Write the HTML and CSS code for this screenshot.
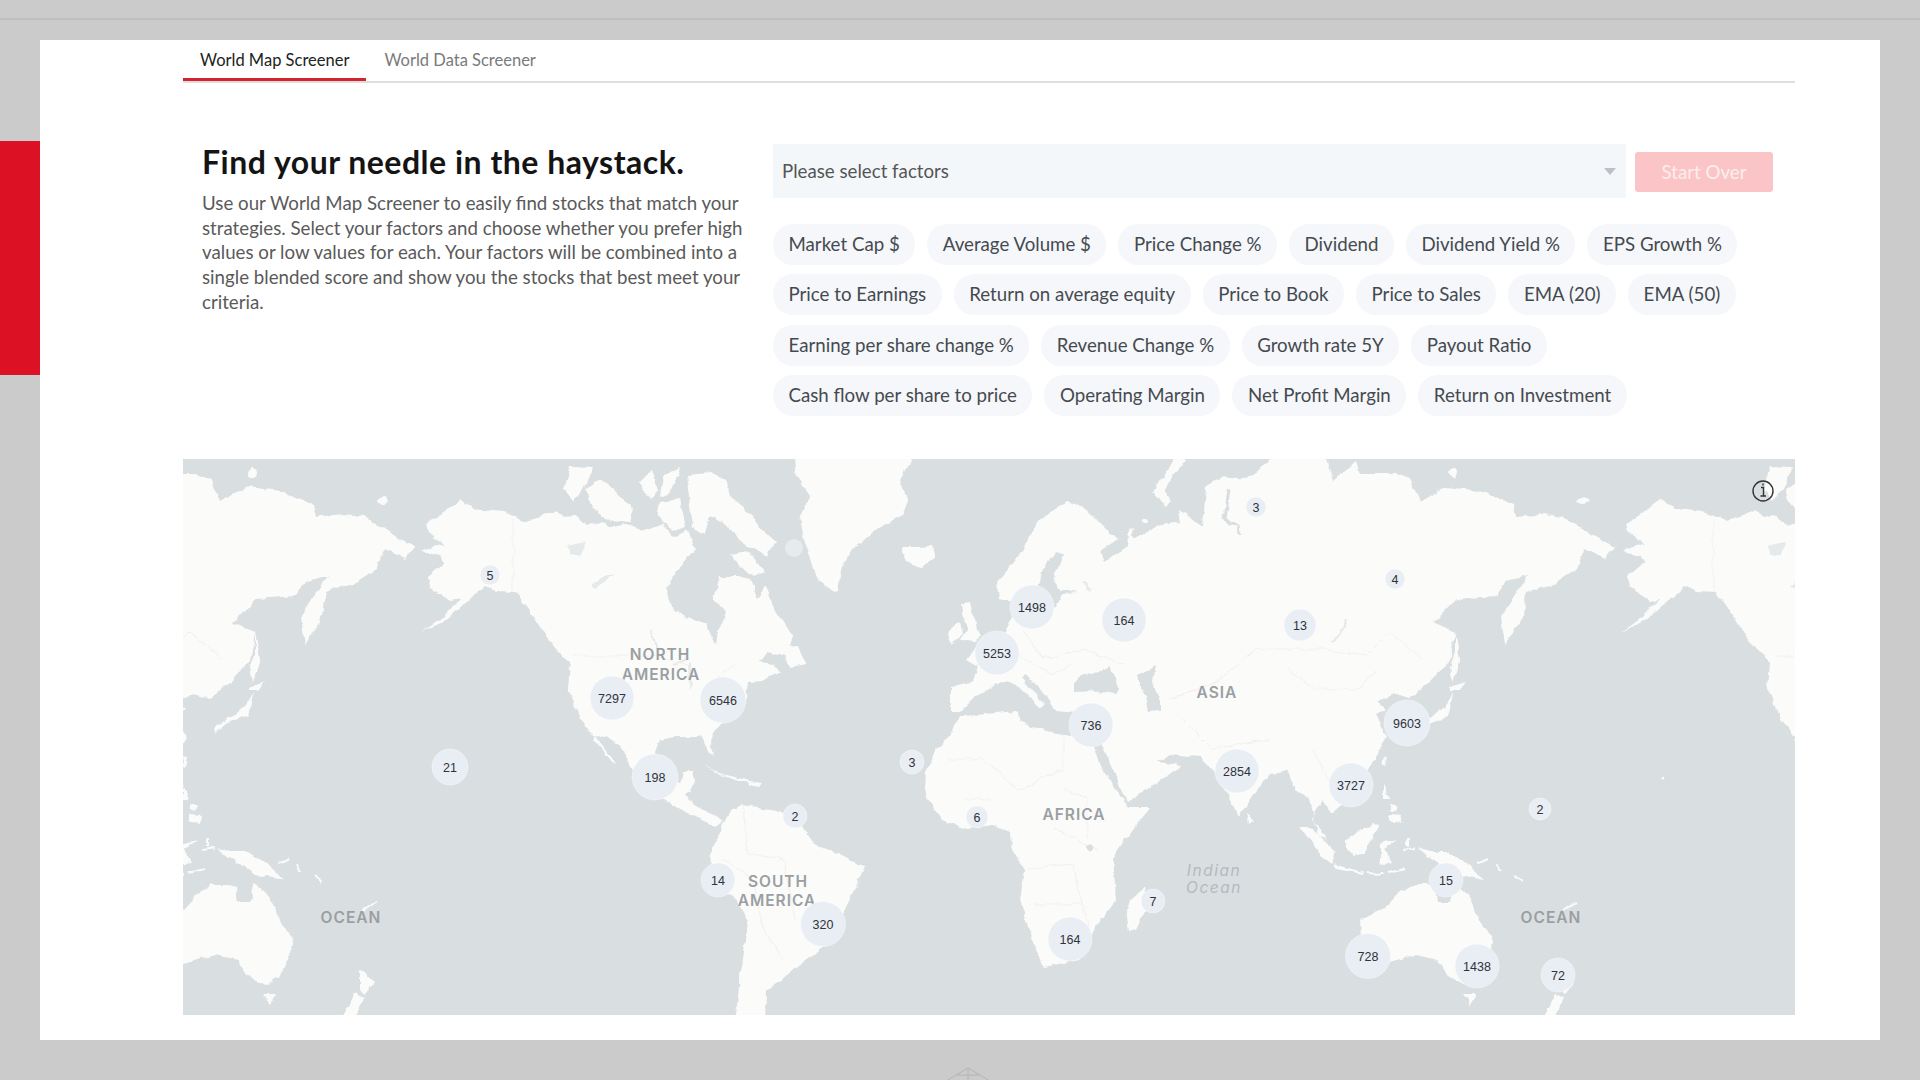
FILE: index.html
```html
<!DOCTYPE html>
<html lang="en">
<head>
    <meta charset="UTF-8">
    <title>World Map Screener</title>
    <link rel="stylesheet" href="styles.css">
</head>
<body>
    <div class="top-strip"></div>
    <div class="page">
        <div class="side">
            <div class="flag"></div>
        </div>
        <div class="card">
            <div class="tabs">
                <div class="tab active">World Map Screener</div>
                <div class="tab">World Data Screener</div>
            </div>
            <div class="intro">
                <div class="intro-text">
                    <h1>Find your needle in the haystack.</h1>
                    <p>Use our World Map Screener to easily find stocks that match your strategies. Select your factors and choose whether you prefer high values or low values for each. Your factors will be combined into a single blended score and show you the stocks that best meet your criteria.</p>
                </div>
                <div class="factors">
                    <div class="select-row">
                        <div class="select">
                            <span>Please select factors</span>
                            <span class="caret"></span>
                        </div>
                        <button class="start-over">Start Over</button>
                    </div>
                    <div class="chips">
                        <span class="chip">Market Cap $</span>
                        <span class="chip">Average Volume $</span>
                        <span class="chip">Price Change %</span>
                        <span class="chip">Dividend</span>
                        <span class="chip">Dividend Yield %</span>
                        <span class="chip">EPS Growth %</span>
                        <span class="chip">Price to Earnings</span>
                        <span class="chip">Return on average equity</span>
                        <span class="chip">Price to Book</span>
                        <span class="chip">Price to Sales</span>
                        <span class="chip">EMA (20)</span>
                        <span class="chip">EMA (50)</span>
                        <span class="chip">Earning per share change %</span>
                        <span class="chip">Revenue Change %</span>
                        <span class="chip">Growth rate 5Y</span>
                        <span class="chip">Payout Ratio</span>
                        <span class="chip">Cash flow per share to price</span>
                        <span class="chip">Operating Margin</span>
                        <span class="chip">Net Profit Margin</span>
                        <span class="chip">Return on Investment</span>
                    </div>
                </div>
            </div>
            <div class="map">
                <svg class="map-svg" viewBox="0 0 1612 556" width="1612" height="556">
                    <defs>
                        <filter id="coast" filterUnits="userSpaceOnUse" x="0" y="0" width="1612" height="556">
                            <feTurbulence type="fractalNoise" baseFrequency="0.09" numOctaves="3" seed="4" result="noise"/>
                            <feDisplacementMap in="SourceGraphic" in2="noise" scale="6" xChannelSelector="R" yChannelSelector="G"/>
                            <feGaussianBlur stdDeviation="0.5"/>
                        </filter>
                        <g id="land">
                            <!-- North America -->
                            <path class="ground" d="M239 93 L253 85 L262 87 L245 72 L243 65 L258 55 L277 41 L293 50 L320 53 L343 62 L363 55 L373 50 L380 58 L393 57 L403 67 L417 63 L430 68 L443 65 L463 72 L480 65 L490 78 L505 72 L512 90 L493 113 L483 130 L490 150 L513 163 L523 163 L528 177 L533 185 L535 173 L543 153 L530 140 L537 117 L557 117 L567 120 L575 140 L582 128 L592 150 L610 177 L607 185 L600 197 L583 193 L577 203 L590 205 L598 213 L580 222 L565 223 L563 240 L553 257 L533 270 L527 280 L531 296 L526 293 L518 278 L505 278 L490 278 L477 281 L472 294 L478 308 L490 322 L497 325 L500 312 L510 312 L512 322 L507 333 L502 336 L506 342 L520 350 L535 358 L541 362 L532 368 L518 360 L505 354 L490 346 L470 336 L451 312 L440 292 L425 278 L410 277 L397 260 L385 230 L387 203 L373 190 L360 173 L350 157 L333 133 L313 132 L302 127 L287 140 L260 163 L238 173 L258 160 L277 140 L267 142 L247 128 L245 117 L262 103 L257 97 Z"/>
                            <path class="ground" d="M413 278 L433 306 L429 304 L411 281 Z"/>
                            <path class="ground" d="M380 30 L387 7 L410 8 L400 30 L390 42 Z"/>
                            <path class="ground" d="M403 30 L417 20 L430 30 L450 50 L447 63 L420 60 L407 43 Z"/>
                            <path class="ground" d="M457 23 L470 10 L475 33 L467 40 Z"/>
                            <path class="ground" d="M480 17 L497 10 L487 33 L477 37 Z"/>
                            <path class="ground" d="M477 43 L497 40 L503 68 L490 72 L474 58 Z"/>
                            <path class="ground" d="M503 15 L528 13 L543 20 L547 37 L563 50 L575 67 L592 83 L583 97 L563 87 L543 67 L527 58 L522 75 L510 68 Z"/>
                            <path class="ground" d="M548 95 L565 92 L582 112 L570 116 L555 108 Z"/>
                            <path class="ground" d="M600 188 L615 187 L622 205 L608 208 L602 200 Z"/>
                            <path class="ground" d="M520 306 L540 315 L560 320 L570 323 L557 323 L537 315 Z"/>
                            <path class="ground" d="M567 322 L578 324 L575 328 L568 326 Z"/>
                            <path class="lake" d="M383 87 L403 83 L397 97 L388 95 Z"/>
                            <path class="lake" d="M408 128 L418 118 L432 114 L420 124 L412 129 Z"/>
                            <path class="lake-line" d="M468 173 L474 190 M507 203 L508 230 M490 205 L505 200"/>
                            <path class="border" d="M390 197 L447 197 L470 197 L505 206 M330 60 L330 130 M533 220 L552 205"/>

                            <!-- Greenland and Iceland -->
                            <path class="ground" d="M733 -8 L717 20 L725 43 L720 57 L690 72 L667 93 L658 110 L655 132 L650 133 L635 122 L627 97 L620 77 L617 57 L627 37 L613 17 L610 -8 Z"/>
                            <path class="ground" d="M718 88 L733 88 L750 87 L752 97 L737 108 L723 103 Z"/>

                            <!-- South America -->
                            <path class="ground" d="M540 365 L550 350 L560 345 L580 350 L600 353 L620 368 L630 385 L653 393 L682 408 L673 428 L663 448 L653 478 L630 495 L610 510 L600 521 L583 531 L582 566 L552 566 L557 518 L563 481 L565 461 L553 441 L540 431 L527 418 L528 391 L538 375 Z"/>
                            <path class="border" d="M560 345 L565 395 L600 400 L612 460 M540 400 L570 420 L580 470 L600 500"/>

                            <!-- Eurasia -->
                            <path class="ground" d="M768 253 L768 227 L790 223 L795 207 L783 200 L793 190 L820 177 L830 157 L835 145 L817 140 L815 123 L840 90 L853 63 L883 43 L900 48 L935 80 L917 92 L922 103 L933 95 L945 87 L947 68 L950 80 L973 67 L997 63 L995 50 L1020 67 L1023 27 L1040 17 L1062 20 L1087 3 L1090 -8 L1140 -8 L1150 22 L1173 3 L1177 15 L1213 15 L1227 20 L1237 43 L1263 28 L1297 32 L1330 45 L1333 58 L1360 55 L1380 57 L1417 80 L1432 88 L1422 100 L1402 90 L1393 110 L1370 125 L1343 133 L1340 157 L1322 187 L1318 157 L1333 133 L1345 117 L1323 122 L1313 137 L1273 140 L1250 163 L1272 173 L1267 203 L1247 223 L1227 240 L1210 235 L1195 243 L1203 250 L1192 256 L1204 278 L1190 301 L1175 330 L1157 348 L1149 355 L1139 341 L1129 358 L1144 380 L1135 375 L1126 340 L1113 331 L1104 311 L1087 315 L1064 345 L1056 358 L1045 335 L1030 311 L1017 298 L987 295 L975 303 L997 306 L993 311 L945 343 L940 333 L920 288 L905 268 L892 252 L885 253 L873 252 L860 232 L842 216 L838 218 L855 238 L862 245 L855 250 L850 243 L832 224 L815 223 L807 230 L790 240 L777 253 Z"/>
                            <path class="sea" d="M857 123 L860 110 L872 92 L882 95 L873 113 L870 122 L877 132 L893 132 L878 137 L873 147 L860 160 L848 150 L852 135 Z"/>
                            <path class="sea" d="M892 223 L900 215 L917 213 L927 208 L937 230 L933 235 L913 232 L892 233 Z"/>
                            <path class="sea" d="M955 217 L973 208 L970 223 L977 240 L977 252 L965 253 L963 240 L957 227 Z"/>
                            <path class="sea-line" d="M1046 30 L1042 60 L1048 65 L1056 66 L1057 75"/>
                            <path class="lake-line" d="M1163 162 L1158 175 L1147 183 M900 123 L908 132"/>
                            <path class="border" d="M840 170 L860 200 L900 190 L940 205 M830 195 L870 215 L890 205 M985 240 L1030 225 L1073 190 L1107 190 L1140 190 L1183 197 L1207 173 L1240 200 M1103 210 L1133 230 L1173 230 L1193 213 M1000 260 L1030 290 L1087 280 M1130 290 L1150 330"/>
                            <path class="ground" d="M778 145 L787 143 L790 157 L798 177 L792 183 L777 182 L785 170 L780 160 Z"/>
                            <path class="ground" d="M765 173 L777 163 L780 175 L767 185 Z"/>
                            <path class="ground" d="M997 -8 L982 13 L970 33 L982 47 L988 42 L983 33 L987 20 L1003 3 Z"/>
                            <path class="ground" d="M945 70 L950 68 L948 80 L945 78 Z"/>
                            <circle class="ground" cx="962" cy="62" r="3"/>
                            <ellipse class="ground" cx="1400" cy="42" rx="6" ry="3"/>
                            <ellipse class="ground" cx="1270" cy="14" rx="4" ry="5"/>
                            <path class="ground" d="M1272 172 L1277 200 L1273 213 L1270 223 L1267 208 L1272 193 Z"/>
                            <path class="ground" d="M1267 228 L1282 223 L1275 232 L1267 232 Z"/>
                            <path class="ground" d="M1270 235 L1267 250 L1265 257 L1240 266 L1232 275 L1231 268 L1252 256 L1263 245 Z"/>

                            <!-- Southeast Asia -->
                            <path class="ground" d="M1201 298 L1204 299 L1202 308 L1199 306 Z"/>
                            <path class="ground" d="M1064 353 L1071 363 L1066 365 Z"/>
                            <path class="ground" d="M1200 325 L1206 341 L1200 341 Z"/>
                            <path class="ground" d="M1206 355 L1219 356 L1217 365 L1206 361 Z"/>
                            <path class="ground" d="M1207 345 L1214 347 L1212 353 L1207 351 Z"/>
                            <path class="ground" d="M1162 381 L1190 365 L1195 366 L1182 395 L1171 398 L1162 388 Z"/>
                            <path class="ground" d="M1117 368 L1128 368 L1153 393 L1149 405 L1137 395 Z"/>
                            <path class="ground" d="M1151 405 L1180 413 L1179 415 L1153 410 Z"/>
                            <path class="ground" d="M1197 385 L1215 381 L1201 390 L1208 403 L1197 405 Z"/>
                            <path class="ground-line" d="M1184 414 L1200 415 M1205 414 L1222 410 M1220 391 L1232 389 M1224 380 L1224 388"/>
                            <path class="ground" d="M1235 388 L1248 393 L1266 393 L1284 405 L1301 420 L1285 417 L1277 418 L1259 405 L1244 398 Z"/>
                            <path class="ground-line" d="M1295 405 L1306 400 M1314 405 L1318 412 M1332 416 L1340 423 M1380 452 L1393 443"/>

                            <!-- Australia and New Zealand -->
                            <path class="ground" d="M1177 460 L1178 478 L1185 495 L1200 505 L1233 496 L1255 501 L1263 515 L1280 526 L1297 518 L1307 495 L1310 478 L1300 468 L1287 440 L1272 423 L1267 443 L1255 443 L1253 428 L1243 425 L1230 425 L1215 435 L1200 451 Z"/>
                            <path class="ground" d="M1280 535 L1292 535 L1287 546 Z"/>
                            <path class="ground" d="M1377 511 L1392 523 L1382 535 L1377 531 Z"/>
                            <path class="ground" d="M1355 566 L1373 535 L1382 538 L1367 566 Z"/>

                            <!-- Africa -->
                            <path class="ground" d="M743 311 L742 336 L760 361 L783 370 L810 366 L827 373 L828 388 L842 411 L837 441 L848 478 L860 508 L897 501 L913 468 L933 441 L930 398 L967 348 L945 348 L920 311 L912 291 L905 272 L887 277 L863 273 L837 263 L833 252 L803 255 L783 257 L777 258 L767 277 L765 278 L753 291 Z"/>
                            <path class="ground" d="M962 428 L965 445 L953 471 L945 473 L943 458 L948 441 Z"/>
                            <path class="border" d="M765 300 L800 300 L835 330 L880 310 L880 278 M780 340 L810 340 M880 330 L905 340 L905 380 M845 410 L890 405 L905 470 M850 445 L900 445 M870 370 L915 390"/>
                            <ellipse class="sea" cx="907" cy="389" rx="3" ry="4"/>
                            <circle class="ground" cx="1480" cy="318" r="1.5"/>
                        </g>
                    </defs>

                    <rect class="ocean" width="1612" height="556"/>
                    <g filter="url(#coast)">
                        <use href="#land" x="-1200"/>
                        <use href="#land"/>
                        <use href="#land" x="1200"/>
                    </g>

                    <text class="region" x="477" y="201">NORTH</text>
                    <text class="region" x="478" y="221">AMERICA</text>
                    <text class="region" x="595" y="428">SOUTH</text>
                    <text class="region" x="594" y="447">AMERICA</text>
                    <text class="region" x="891" y="361">AFRICA</text>
                    <text class="region" x="1034" y="239">ASIA</text>
                    <text class="region" x="168" y="464">OCEAN</text>
                    <text class="region" x="1368" y="464">OCEAN</text>
                    <text class="water" x="1031" y="417">Indian</text>
                    <text class="water" x="1031" y="434">Ocean</text>

                    <circle class="bubble-empty" cx="611" cy="89" r="9"/>

                    <g class="cluster"><circle cx="307" cy="116" r="10"/><text x="307" y="120.5">5</text></g>
                    <g class="cluster"><circle cx="429" cy="239" r="22"/><text x="429" y="243.5">7297</text></g>
                    <g class="cluster"><circle cx="540" cy="241" r="23"/><text x="540" y="245.5">6546</text></g>
                    <g class="cluster"><circle cx="472" cy="318" r="23"/><text x="472" y="322.5">198</text></g>
                    <g class="cluster"><circle cx="267" cy="308" r="18"/><text x="267" y="312.5">21</text></g>
                    <g class="cluster"><circle cx="612" cy="357" r="12"/><text x="612" y="361.5">2</text></g>
                    <g class="cluster"><circle cx="535" cy="421" r="17"/><text x="535" y="425.5">14</text></g>
                    <g class="cluster"><circle cx="640" cy="465" r="22.5"/><text x="640" y="469.5">320</text></g>
                    <g class="cluster"><circle cx="729" cy="303" r="12"/><text x="729" y="307.5">3</text></g>
                    <g class="cluster"><circle cx="794" cy="358" r="11"/><text x="794" y="362.5">6</text></g>
                    <g class="cluster"><circle cx="887" cy="480" r="22"/><text x="887" y="484.5">164</text></g>
                    <g class="cluster"><circle cx="970" cy="442" r="12"/><text x="970" y="446.5">7</text></g>
                    <g class="cluster"><circle cx="849" cy="148" r="22"/><text x="849" y="152.5">1498</text></g>
                    <g class="cluster"><circle cx="814" cy="194" r="22"/><text x="814" y="198.5">5253</text></g>
                    <g class="cluster"><circle cx="941" cy="161" r="22"/><text x="941" y="165.5">164</text></g>
                    <g class="cluster"><circle cx="908" cy="266" r="22"/><text x="908" y="270.5">736</text></g>
                    <g class="cluster"><circle cx="1073" cy="48" r="10"/><text x="1073" y="52.5">3</text></g>
                    <g class="cluster"><circle cx="1212" cy="120" r="10"/><text x="1212" y="124.5">4</text></g>
                    <g class="cluster"><circle cx="1117" cy="166" r="16"/><text x="1117" y="170.5">13</text></g>
                    <g class="cluster"><circle cx="1224" cy="264" r="23"/><text x="1224" y="268.5">9603</text></g>
                    <g class="cluster"><circle cx="1054" cy="312" r="22"/><text x="1054" y="316.5">2854</text></g>
                    <g class="cluster"><circle cx="1168" cy="326" r="22"/><text x="1168" y="330.5">3727</text></g>
                    <g class="cluster"><circle cx="1357" cy="350" r="11"/><text x="1357" y="354.5">2</text></g>
                    <g class="cluster"><circle cx="1263" cy="421" r="17"/><text x="1263" y="425.5">15</text></g>
                    <g class="cluster"><circle cx="1185" cy="497" r="22.5"/><text x="1185" y="501.5">728</text></g>
                    <g class="cluster"><circle cx="1294" cy="507" r="22"/><text x="1294" y="511.5">1438</text></g>
                    <g class="cluster"><circle cx="1375" cy="516" r="17"/><text x="1375" y="520.5">72</text></g>

                    <!-- info icon -->
                    <g class="info">
                        <circle cx="1580" cy="32" r="10"/>
                        <path d="M1578 28.5 H1580.5 V37 M1577.5 37 H1583 M1580 24.5 V26.5"/>
                    </g>
                </svg>
            </div>
        </div>
    </div>
    <div class="footer-mark">
        <svg viewBox="0 0 46 14" width="46" height="14">
            <path d="M1 14 L23 1 L45 14 M23 1 V14 M12 8 H34"/>
        </svg>
    </div>
</body>
</html>
```

FILE: styles.css
```css
html, body {
    margin: 0;
    height: 1080px;
    overflow: hidden;
}

body {
    background-color: #cbcbcb;
    font-family: Lato, "Open Sans", sans-serif;
}

.top-strip {
    height: 18px;
    border-bottom: 2px solid #bfbfbf;
    margin-bottom: 20px;
}

.page {
    display: flex;
    align-items: flex-start;
}

.side {
    width: 40px;
    padding-top: 101px;
}

.flag {
    height: 234px;
    background-color: #dc1224;
}

.card {
    width: 1840px;
    height: 1000px;
    box-sizing: border-box;
    padding: 0 85px 0 143px;
    background-color: #fff;
}

.tabs {
    display: flex;
    height: 43px;
    box-sizing: border-box;
    border-bottom: 2px solid #dedede;
}

.tab {
    height: 41px;
    box-sizing: border-box;
    padding: 0 18px;
    font-size: 16.5px;
    line-height: 41px;
    color: #7a7a7a;
}

.tab.active {
    padding: 0 17px;
    color: #222;
    border-bottom: 3px solid #d2232f;
}

.intro {
    display: flex;
    margin-top: 61px;
}

.intro-text {
    width: 552px;
    padding: 0 19px;
}

h1 {
    margin: 0 0 11px;
    font-size: 32px;
    line-height: 36px;
    font-weight: 700;
    letter-spacing: 0.5px;
    color: #141414;
}

p {
    margin: 0;
    font-size: 18.7px;
    line-height: 24.7px;
    color: #5a5a5a;
}

.factors {
    width: 1000px;
}

.select-row {
    display: flex;
    align-items: center;
    gap: 9px;
}

.select {
    display: flex;
    justify-content: space-between;
    align-items: center;
    width: 853px;
    height: 54px;
    box-sizing: border-box;
    padding: 0 10px 0 9px;
    background-color: #f4f7fa;
    font-size: 18.7px;
    color: #555;
}

.caret {
    width: 0;
    height: 0;
    border-left: 6px solid transparent;
    border-right: 6px solid transparent;
    border-top: 7px solid #bcc1c6;
}

.start-over {
    width: 138px;
    height: 40px;
    margin-top: 1px;
    border: none;
    border-radius: 3px;
    background-color: #fbc5c7;
    font-family: inherit;
    font-size: 18.7px;
    color: #fdeeee;
}

.chips {
    display: flex;
    flex-wrap: wrap;
    gap: 9.3px 12px;
    margin-top: 26px;
}

.chip {
    height: 41px;
    padding: 0 15.5px;
    border-radius: 20px;
    background-color: #f5f7fa;
    font-size: 18.7px;
    line-height: 41px;
    color: #454a50;
}

.map {
    margin-top: 43px;
}

.map-svg {
    display: block;
}

.ocean {
    fill: #d9dee1;
}

.ground {
    fill: #fbfbfa;
}

.ground-line {
    fill: none;
    stroke: #fbfbfa;
    stroke-width: 2;
}

.sea {
    fill: #d9dee1;
}

.sea-line {
    fill: none;
    stroke: #d9dee1;
    stroke-width: 3;
}

.lake {
    fill: #e6e9ea;
}

.lake-line {
    fill: none;
    stroke: #e6e9ea;
    stroke-width: 2;
}

.border {
    fill: none;
    stroke: #f4efef;
    stroke-width: 1;
}

.region {
    font-family: Inter, sans-serif;
    font-size: 15.5px;
    font-weight: 600;
    letter-spacing: 1px;
    text-anchor: middle;
    fill: #9a9fa3;
}

.water {
    font-family: Inter, sans-serif;
    font-size: 15.5px;
    font-style: italic;
    letter-spacing: 1.5px;
    text-anchor: middle;
    fill: #b4babd;
}

.bubble-empty {
    fill: #e6ebee;
}

.cluster circle {
    fill: #e9edf4;
    stroke: rgba(255, 255, 255, 0.4);
    stroke-width: 1;
}

.cluster text {
    font-family: "Liberation Sans", sans-serif;
    font-size: 12.5px;
    text-anchor: middle;
    fill: #2f333a;
}

.info circle,
.info path {
    fill: none;
    stroke: #333;
    stroke-width: 1.4;
}

.footer-mark {
    display: flex;
    padding: 27px 0 0 945px;
}

.footer-mark path {
    fill: none;
    stroke: #b4b4b4;
    stroke-width: 1;
}
```
